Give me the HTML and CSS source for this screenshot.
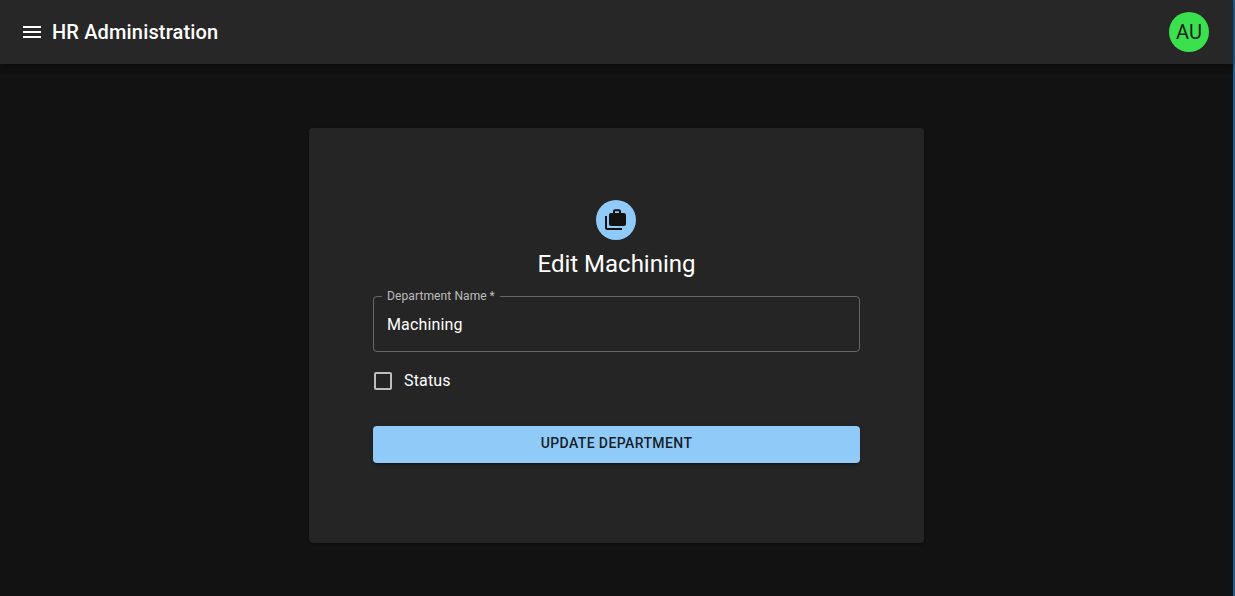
FILE: index.html
```html
<!DOCTYPE html>
<html lang="en">
<head>
<meta charset="utf-8">
<title>HR Administration</title>
<link rel="stylesheet" href="styles.css">
</head>
<body>
<div class="app">
  <header class="appbar">
    <button class="menu-btn" aria-label="menu">
      <svg class="icon" viewBox="0 0 24 24"><path d="M3 18h18v-2H3v2zm0-5h18v-2H3v2zm0-7v2h18V6H3z"/></svg>
    </button>
    <h1 class="brand">HR Administration</h1>
    <div class="avatar">AU</div>
  </header>
  <main class="content">
    <section class="card">
      <div class="badge">
        <svg class="badge-icon" viewBox="0 0 24 24"><path d="M3 8H1v12c0 1.1.9 2 2 2h15v-2H3V8z"/><path d="M17 5V3.3c0-1-.8-2-1.8-2h-4.4c-1 0-1.8 1-1.8 2V5H7c-1.1 0-2 .9-2 2v9c0 1.1.9 2 2 2h13c1.1 0 2-.9 2-2V7c0-1.1-.9-2-2-2h-3zm-6-1.7h4V5h-4V3.3z"/></svg>
      </div>
      <h2 class="title">Edit Machining</h2>
      <form class="form">
        <div class="field">
          <fieldset class="outline"><legend class="legend">Department Name&thinsp;*</legend></fieldset>
          <label class="label">Department Name&thinsp;*</label>
          <input class="input" type="text" value="Machining">
        </div>
        <label class="check-row">
          <span class="check-wrap">
            <svg class="check" viewBox="0 0 24 24"><path d="M19 5v14H5V5h14m0-2H5c-1.1 0-2 .9-2 2v14c0 1.1.9 2 2 2h14c1.1 0 2-.9 2-2V5c0-1.1-.9-2-2-2z"/></svg>
          </span>
          <span class="check-text">Status</span>
        </label>
        <button class="submit" type="button">Update Department</button>
      </form>
    </section>
  </main>
</div>
</body>
</html>
```

FILE: styles.css
```css
* { box-sizing: border-box; }
html, body { margin: 0; height: 100%; }
body {
  background: #121212;
  color: #fff;
  font-family: Roboto, "Liberation Sans", sans-serif;
  overflow: hidden;
}
.app {
  height: 596px;
  display: flex;
  flex-direction: column;
  border-right: 2px solid #1f5f8f;
}
.appbar {
  height: 64px;
  flex: none;
  display: flex;
  align-items: center;
  padding: 0 24px 0 10px;
  background: #272727;
  box-shadow: 0 2px 4px -1px rgba(0,0,0,.2), 0 4px 5px rgba(0,0,0,.14), 0 1px 10px rgba(0,0,0,.12);
}
.menu-btn {
  width: 44px;
  height: 44px;
  padding: 10px;
  margin-right: -2px;
  border: 0;
  background: none;
  color: #fff;
  display: flex;
}
.icon { width: 24px; height: 24px; fill: currentColor; }
.brand {
  margin: 0;
  flex: 1;
  font-size: 20px;
  font-weight: 500;
  line-height: 32px;
  letter-spacing: 0.15px;
}
.avatar {
  width: 40px;
  height: 40px;
  border-radius: 50%;
  background: #3be04f;
  color: #1c1c1c;
  font-size: 20px;
  display: flex;
  align-items: center;
  justify-content: center;
}
.content {
  flex: 1;
  padding-top: 64px;
  display: flex;
  justify-content: center;
}
.card {
  width: 615px;
  height: 415px;
  background: #252525;
  border-radius: 4px;
  padding: 72px 64px 0;
  display: flex;
  flex-direction: column;
  align-items: center;
  box-shadow: 0 2px 1px -1px rgba(0,0,0,.2), 0 1px 1px rgba(0,0,0,.14), 0 1px 3px rgba(0,0,0,.12);
}
.badge {
  width: 40px;
  height: 40px;
  margin-right: 1px;
  border-radius: 50%;
  background: #90caf9;
  display: flex;
  align-items: center;
  justify-content: center;
}
.badge-icon { width: 24px; height: 24px; fill: #121212; }
.title {
  margin: 8px 0 0;
  font-size: 24px;
  font-weight: 400;
  line-height: 32px;
}
.form { width: 100%; margin-top: 16px; display: flex; flex-direction: column; }
.field { position: relative; height: 56px; }
.outline {
  position: absolute;
  inset: -5px 0 0;
  margin: 0;
  padding: 0 8px;
  border: 1px solid rgba(255,255,255,.3);
  border-radius: 4px;
  pointer-events: none;
}
.legend {
  padding: 0 5px;
  font-size: 12px;
  line-height: 11px;
  height: 11px;
  letter-spacing: 0.11px;
  visibility: hidden;
}
.label {
  position: absolute;
  left: 14px;
  top: -8px;
  font-size: 12px;
  line-height: 16px;
  letter-spacing: 0.11px;
  color: rgba(255,255,255,.7);
}
.input {
  width: 100%;
  height: 56px;
  padding: 16.5px 14px;
  border: 0;
  background: none;
  color: #fff;
  font: 400 16px/23px Roboto, "Liberation Sans", sans-serif;
  letter-spacing: 0.15px;
  outline: none;
}
.check-row {
  display: flex;
  align-items: center;
  margin-top: 8px;
  height: 42px;
}
.check-wrap { width: 20px; height: 24px; display: flex; margin-left: -2px; margin-right: 9px; }
.check { width: 24px; height: 24px; flex: none; fill: rgba(255,255,255,.7); }
.check-text { font-size: 16px; line-height: 24px; margin-left: 4px; letter-spacing: 0.15px; }
.submit {
  margin-top: 24px;
  height: 37px;
  padding: 0 16px 3px;
  border: 0;
  border-radius: 4px;
  background: #90caf9;
  color: rgba(0,0,0,.87);
  font: 500 14px/24px Roboto, "Liberation Sans", sans-serif;
  letter-spacing: 0.4px;
  text-transform: uppercase;
  box-shadow: 0 3px 1px -2px rgba(0,0,0,.2), 0 2px 2px rgba(0,0,0,.14), 0 1px 5px rgba(0,0,0,.12);
}
```
